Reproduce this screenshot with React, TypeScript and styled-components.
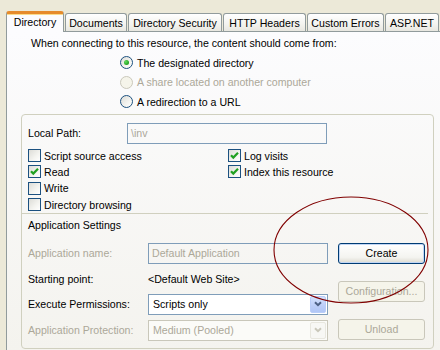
import styled, { createGlobalStyle, css } from 'styled-components';

const GlobalStyle = createGlobalStyle`
  html, body {
    margin: 0;
    padding: 0;
    background: #ece9d8;
  }
  body {
    font-family: 'Liberation Sans', Arial, sans-serif;
    font-size: 10.6px;
    color: #000;
  }
  * { box-sizing: border-box; }
`;

const tabs = [
  { label: 'Directory', w: 58, active: true },
  { label: 'Documents', w: 62 },
  { label: 'Directory Security', w: 94 },
  { label: 'HTTP Headers', w: 83 },
  { label: 'Custom Errors', w: 77 },
  { label: 'ASP.NET', w: 54 },
];

const Chevron = ({ color }: { color: string }) => (
  <svg width="8" height="6" viewBox="0 0 8 6">
    <path d="M1 1.2 L4 4.2 L7 1.2" fill="none" stroke={color} strokeWidth="2" />
  </svg>
);

const Check = () => (
  <svg width="11" height="11" viewBox="0 0 11 11">
    <path d="M2 5.2 L4.3 7.6 L9 2.8" fill="none" stroke="#21a121" strokeWidth="2.2" />
  </svg>
);

const CheckItem = ({ label, checked }: { label?: string; checked?: boolean }) =>
  label ? (
    <CheckRow>
      <CheckBox>{checked && <Check />}</CheckBox>
      <span>{label}</span>
    </CheckRow>
  ) : (
    <span />
  );

const App = () => {
  return (
    <>
      <GlobalStyle />
      <Dialog>
        <TabStrip>
          {tabs.map((t) => (
            <Tab key={t.label} $w={t.w} $active={t.active}>
              {t.label}
            </Tab>
          ))}
        </TabStrip>
        <Panel>
          <Intro>When connecting to this resource, the content should come from:</Intro>
          <RadioList>
            <RadioRow>
              <RadioDot $checked />
              <span>The designated directory</span>
            </RadioRow>
            <RadioRow $disabled>
              <RadioDot $disabled />
              <span>A share located on another computer</span>
            </RadioRow>
            <RadioRow>
              <RadioDot />
              <span>A redirection to a URL</span>
            </RadioRow>
          </RadioList>

          <GroupBox>
            <PathRow>
              <PathLabel>Local Path:</PathLabel>
              <TextBox $w={200} $disabled>
                \inv
              </TextBox>
            </PathRow>
            <CheckGrid>
              <CheckItem label="Script source access" />
              <CheckItem label="Log visits" checked />
              <CheckItem label="Read" checked />
              <CheckItem label="Index this resource" checked />
              <CheckItem label="Write" />
              <CheckItem />
              <CheckItem label="Directory browsing" />
            </CheckGrid>
            <Separator />
            <SectionTitle>Application Settings</SectionTitle>
            <AppArea>
              <AppGrid>
                <FieldLabel $disabled>Application name:</FieldLabel>
                <TextBox $w={180} $disabled>
                  Default Application
                </TextBox>
                <FieldLabel>Starting point:</FieldLabel>
                <FieldLabel>&lt;Default Web Site&gt;</FieldLabel>
                <FieldLabel>Execute Permissions:</FieldLabel>
                <Select>
                  <SelectValue>Scripts only</SelectValue>
                  <DropButton>
                    <Chevron color="#4d6185" />
                  </DropButton>
                </Select>
                <FieldLabel $disabled>Application Protection:</FieldLabel>
                <Select $disabled>
                  <SelectValue>Medium (Pooled)</SelectValue>
                  <DropButton $disabled>
                    <Chevron color="#c9c7ba" />
                  </DropButton>
                </Select>
              </AppGrid>
              <ButtonColumn>
                <Button $default>Create</Button>
                <Button disabled>Configuration...</Button>
                <Button disabled>Unload</Button>
              </ButtonColumn>
            </AppArea>
          </GroupBox>
        </Panel>
        <Annotation width="158" height="110" viewBox="0 0 158 110">
          <ellipse cx="78" cy="54" rx="77" ry="53" fill="none" stroke="#800000" strokeWidth="1.1" />
        </Annotation>
      </Dialog>
    </>
  );
};

export default App;

const Dialog = styled.div`
  position: relative;
  width: 440px;
  height: 350px;
  overflow: hidden;
  background: #ece9d8;
  padding-top: 11px;
`;

const TabStrip = styled.div`
  position: relative;
  z-index: 1;
  display: flex;
  align-items: flex-end;
  gap: 1px;
  height: 21px;
  margin-bottom: -1px;
  padding-left: 6px;
`;

const Tab = styled.div<{ $w: number; $active?: boolean }>`
  flex: none;
  width: ${(p) => p.$w}px;
  height: 18px;
  margin-bottom: 1px;
  display: flex;
  align-items: center;
  justify-content: center;
  white-space: nowrap;
  border: 1px solid #919b9c;
  border-bottom: none;
  border-radius: 3px 3px 0 0;
  background: linear-gradient(180deg, #ffffff 0%, #f3f3ef 60%, #e8e7e0 100%);
  ${(p) =>
    p.$active &&
    css`
      height: 21px;
      margin-bottom: 0;
      padding-bottom: 2px;
      background: #fcfcfe;
      border-top: 3px solid #e68b2c;
      box-shadow: inset 0 1px 0 #fbdc8c;
    `}
`;

const Panel = styled.div`
  margin-left: 6px;
  height: 320px;
  border-left: 1px solid #919b9c;
  border-top: 1px solid #919b9c;
  background: linear-gradient(180deg, #fcfcfe 0%, #f4f3ee 100%);
  padding-top: 5px;
`;

const Intro = styled.div`
  padding-left: 24px;
  line-height: 13px;
`;

const RadioList = styled.div`
  margin: 3px 0 0 113px;
  display: flex;
  flex-direction: column;
`;

const RadioRow = styled.div<{ $disabled?: boolean }>`
  display: flex;
  align-items: center;
  gap: 4px;
  height: 19.5px;
  color: ${(p) => (p.$disabled ? '#aca899' : '#000')};
`;

const RadioDot = styled.span<{ $checked?: boolean; $disabled?: boolean }>`
  position: relative;
  flex: none;
  width: 13px;
  height: 13px;
  border-radius: 50%;
  border: 1px solid ${(p) => (p.$disabled ? '#cac8bb' : '#1c5180')};
  background: ${(p) =>
    p.$disabled
      ? '#f5f4ea'
      : 'linear-gradient(135deg, #dcdcd7 0%, #f4f4f0 60%, #ffffff 100%)'};
  ${(p) =>
    p.$checked &&
    css`
      &::after {
        content: '';
        position: absolute;
        left: 3px;
        top: 3px;
        width: 5px;
        height: 5px;
        border-radius: 50%;
        background: radial-gradient(circle at 35% 35%, #5fdc5c, #21a121 70%);
      }
    `}
`;

const GroupBox = styled.div`
  margin: 2px 0 0 14px;
  width: 413px;
  height: 235px;
  border: 1px solid #d0d0bf;
  border-radius: 4px;
  padding: 8px 0 0 6px;
`;

const PathRow = styled.div`
  display: flex;
  align-items: center;
  height: 21px;
`;

const PathLabel = styled.span`
  width: 99px;
`;

const TextBox = styled.div<{ $w: number; $disabled?: boolean }>`
  width: ${(p) => p.$w}px;
  height: 21px;
  border: 1px solid #7f9db9;
  background: ${(p) => (p.$disabled ? 'transparent' : '#fff')};
  color: ${(p) => (p.$disabled ? '#aca899' : '#000')};
  padding-left: 3px;
  display: flex;
  align-items: center;
`;

const CheckGrid = styled.div`
  display: grid;
  grid-template-columns: 200px 1fr;
  grid-auto-rows: 16.3px;
  margin-top: 4px;
`;

const CheckRow = styled.div`
  display: flex;
  align-items: center;
  gap: 3px;
`;

const CheckBox = styled.span`
  flex: none;
  width: 13px;
  height: 13px;
  border: 1px solid #1c5180;
  background: linear-gradient(135deg, #dcdcd7 0%, #f4f4f0 60%, #ffffff 100%);
  display: flex;
  align-items: center;
  justify-content: center;
`;

const Separator = styled.div`
  margin: 0 0 0 -6px;
  width: 406px;
  height: 1px;
  background: #d0d0bf;
`;

const SectionTitle = styled.div`
  margin-top: 5px;
  line-height: 13px;
`;

const AppArea = styled.div`
  display: flex;
  gap: 10px;
  margin-top: 11px;
`;

const AppGrid = styled.div`
  display: grid;
  grid-template-columns: 120px 180px;
  grid-template-rows: 21px 20px 21px 21px;
  row-gap: 5px;
  align-items: center;
`;

const FieldLabel = styled.span<{ $disabled?: boolean }>`
  white-space: nowrap;
  color: ${(p) => (p.$disabled ? '#aca899' : '#000')};
`;

const Select = styled.div<{ $disabled?: boolean }>`
  display: flex;
  align-items: stretch;
  height: 21px;
  padding: 1px;
  border: 1px solid ${(p) => (p.$disabled ? '#c9c7ba' : '#7f9db9')};
  background: ${(p) => (p.$disabled ? '#fbfbf8' : '#fff')};
  color: ${(p) => (p.$disabled ? '#aca899' : '#000')};
`;

const SelectValue = styled.span`
  flex: 1;
  display: flex;
  align-items: center;
  padding-left: 3px;
  margin-right: 1px;
`;

const DropButton = styled.span<{ $disabled?: boolean }>`
  flex: none;
  width: 16px;
  display: flex;
  align-items: center;
  justify-content: center;
  border-radius: 2px;
  border: 1px solid ${(p) => (p.$disabled ? '#e8e7df' : '#b9cdf9')};
  background: ${(p) =>
    p.$disabled ? '#f7f7f4' : 'linear-gradient(180deg, #d4e2fd 0%, #bccef9 60%, #b0c6f6 100%)'};
`;

const ButtonColumn = styled.div`
  display: flex;
  flex-direction: column;
  gap: 17px;
`;

const Button = styled.button<{ $default?: boolean }>`
  width: 87px;
  height: 21px;
  padding: 0;
  font: inherit;
  color: #000;
  border: 1px solid #003c74;
  border-radius: 3px;
  background: linear-gradient(180deg, #ffffff 0%, #f4f4f0 70%, #dcdad0 100%);
  ${(p) =>
    p.$default &&
    css`
      box-shadow: inset 0 0 0 1px #c2d6f4;
    `}
  &:disabled {
    color: #aca899;
    border-color: #c9c7ba;
    background: #f5f4ea;
  }
`;

const Annotation = styled.svg`
  position: absolute;
  left: 273px;
  top: 196px;
  pointer-events: none;
`;
